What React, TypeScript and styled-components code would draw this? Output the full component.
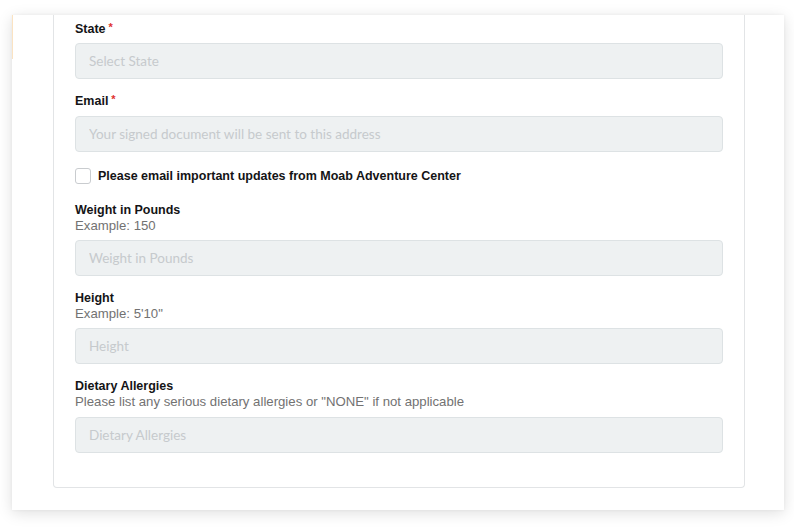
import React from "react";
import styled, { createGlobalStyle } from "styled-components";

const Global = createGlobalStyle`
  html, body { margin: 0; padding: 0; background: #ffffff; }
  body { width: 794px; height: 528px; overflow: hidden; }
  * { box-sizing: border-box; }
`;

const Page = styled.div`
  padding: 15px 10px 0 12px;
  height: 528px;
`;

const Window = styled.div`
  width: 772px;
  height: 495px;
  background-color: #ffffff;
  background-image: linear-gradient(#fbe3c2, #fbe3c2);
  background-repeat: no-repeat;
  background-size: 1px 44px;
  box-shadow: 0 3px 14px rgba(0, 0, 0, 0.13), 0 0 3px rgba(0, 0, 0, 0.05);
  padding: 0 39px 0 41px;
  overflow: hidden;
`;

const Card = styled.div`
  border: 1px solid #e2e4e6;
  border-top: none;
  border-radius: 0 0 4px 4px;
  padding: 6px 21px 34px 21px;
  display: flex;
  flex-direction: column;
`;

const Field = styled.div<{ $gap?: number }>`
  display: flex;
  flex-direction: column;
  margin-bottom: ${(p) => p.$gap ?? 14}px;
`;

const Label = styled.div`
  font-family: "Liberation Sans", Arial, sans-serif;
  font-weight: 700;
  font-size: 12.5px;
  line-height: 16px;
  color: #141416;
  display: flex;
  align-items: flex-start;
`;

const Req = styled.span`
  color: #e0312f;
  font-size: 11px;
  line-height: 10px;
  margin-left: 3px;
  margin-top: 1px;
`;

const Help = styled.div`
  font-family: "Liberation Sans", Arial, sans-serif;
  font-size: 13.2px;
  line-height: 15px;
  color: #727272;
`;

const Input = styled.input<{ $top?: number }>`
  margin-top: ${(p) => p.$top ?? 7}px;
  height: 36px;
  width: 100%;
  background: #eef1f2;
  border: 1px solid #dde2e4;
  border-radius: 4px;
  padding: 0 13px;
  font-family: Lato, "Open Sans", sans-serif;
  font-size: 13.5px;
  color: #333;
  outline: none;
  &::placeholder { color: #c6cacd; }
`;

const CheckRow = styled.label`
  display: flex;
  align-items: center;
  gap: 7px;
  margin: 2px 0 18px;
  font-family: "Liberation Sans", Arial, sans-serif;
  font-weight: 700;
  font-size: 12.5px;
  line-height: 16px;
  color: #141416;
`;

const Box = styled.span`
  width: 16px;
  height: 16px;
  border: 1px solid #c9cccf;
  border-radius: 3px;
  background: #fff;
  flex: none;
`;

export default function App() {
  return (
    <Page>
      <Global />
      <Window>
        <Card>
          <Field>
            <Label>State<Req>*</Req></Label>
            <Input $top={6} placeholder="Select State" />
          </Field>
          <Field>
            <Label>Email<Req>*</Req></Label>
            <Input placeholder="Your signed document will be sent to this address" />
          </Field>
          <CheckRow>
            <Box />
            Please email important updates from Moab Adventure Center
          </CheckRow>
          <Field>
            <Label>Weight in Pounds</Label>
            <Help>Example: 150</Help>
            <Input placeholder="Weight in Pounds" />
          </Field>
          <Field>
            <Label>Height</Label>
            <Help>Example: 5'10"</Help>
            <Input placeholder="Height" />
          </Field>
          <Field $gap={0}>
            <Label>Dietary Allergies</Label>
            <Help>Please list any serious dietary allergies or "NONE" if not applicable</Help>
            <Input $top={8} placeholder="Dietary Allergies" />
          </Field>
        </Card>
      </Window>
    </Page>
  );
}
